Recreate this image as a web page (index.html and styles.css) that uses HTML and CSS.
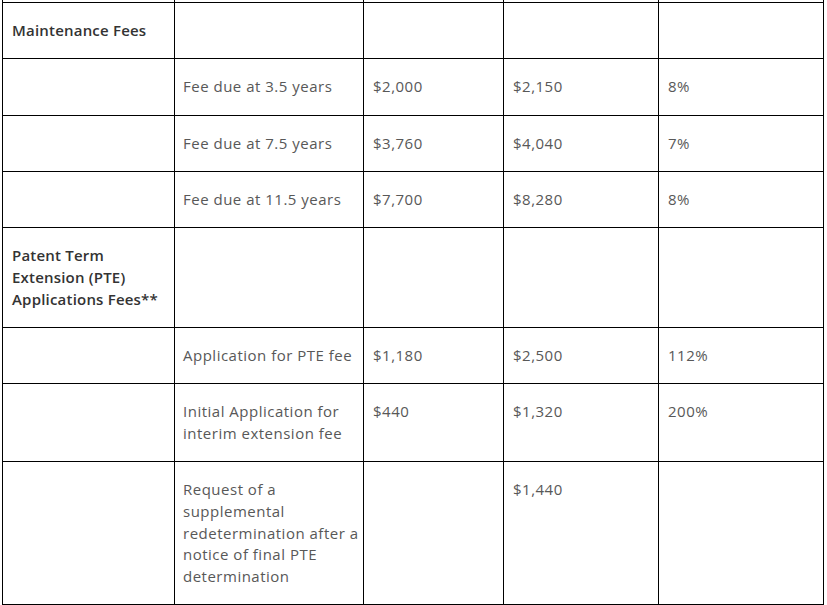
FILE: index.html
```
<!DOCTYPE html>
<html>
<head>
<meta charset="utf-8">
<link rel="stylesheet" href="styles.css">
</head>
<body>
<table class="fees">
<colgroup>
<col class="c1"><col class="c2"><col class="c3"><col class="c4"><col class="c5">
</colgroup>
<tbody>
<tr class="prev"><td></td><td></td><td></td><td></td><td></td></tr>
<tr><td class="head">Maintenance Fees</td><td></td><td></td><td></td><td></td></tr>
<tr><td></td><td>Fee due at 3.5 years</td><td class="num">$2,000</td><td class="num">$2,150</td><td class="num">8%</td></tr>
<tr><td></td><td>Fee due at 7.5 years</td><td class="num">$3,760</td><td class="num">$4,040</td><td class="num">7%</td></tr>
<tr><td></td><td>Fee due at 11.5 years</td><td class="num">$7,700</td><td class="num">$8,280</td><td class="num">8%</td></tr>
<tr><td class="head">Patent Term Extension (PTE) Applications Fees**</td><td></td><td></td><td></td><td></td></tr>
<tr><td></td><td>Application for PTE fee</td><td class="num">$1,180</td><td class="num">$2,500</td><td class="num">112%</td></tr>
<tr><td></td><td>Initial Application for interim extension fee</td><td class="num">$440</td><td class="num">$1,320</td><td class="num">200%</td></tr>
<tr><td></td><td>Request of a supplemental redetermination after a notice of final PTE determination</td><td></td><td class="num">$1,440</td><td></td></tr>
</tbody>
</table>
</body>
</html>
```
FILE: styles.css
```
html, body {
  margin: 0;
  padding: 0;
  background: #fff;
}
body {
  font-family: "Open Sans", "Liberation Sans", sans-serif;
  font-size: 15px;
  color: #585858;
  overflow: hidden;
}
.fees {
  border-collapse: collapse;
  table-layout: fixed;
  width: 822px;
  margin: -19px 0 0 2px;
}
.c1 { width: 172px; }
.c2 { width: 189px; }
.c3 { width: 140px; }
.c4 { width: 155px; }
.c5 { width: 165px; }
.fees td {
  border: 1px solid #000;
  padding: 17px 4px 16.5px 8px;
  line-height: 21.75px;
  vertical-align: top;
  text-align: left;
  letter-spacing: 0.5px;
}
.fees tr.prev td {
  height: 20px;
  padding: 0;
}
.fees td.head {
  font-weight: 600;
  color: #333;
  padding-left: 9px;
  letter-spacing: 0.2px;
}
.fees td.num {
  padding-left: 9px;
  letter-spacing: 0.5px;
}
```
